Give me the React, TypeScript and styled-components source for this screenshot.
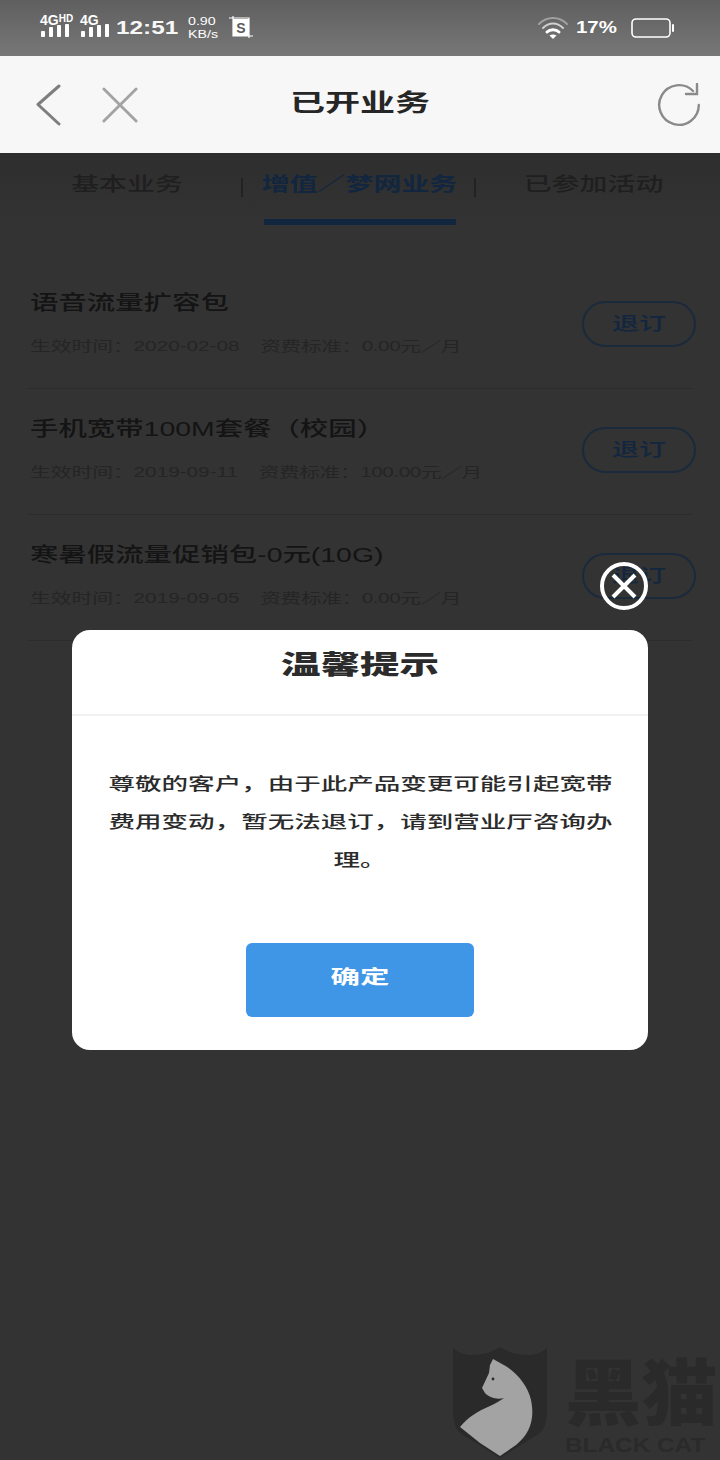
import React from 'react';
import styled, { createGlobalStyle } from 'styled-components';

const GlobalStyle = createGlobalStyle`
  html, body {
    margin: 0;
    padding: 0;
    background: #333333;
  }
  * {
    box-sizing: border-box;
  }
`;

const FONT = `"Liberation Sans", "Noto Sans CJK SC", sans-serif`;

const Page = styled.div`
  position: relative;
  width: 720px;
  height: 1460px;
  overflow: hidden;
  background: #333333;
  font-family: ${FONT};
`;

const StatusBar = styled.div`
  display: flex;
  align-items: center;
  height: 56px;
  padding: 0 46px 0 40px;
  background: linear-gradient(#5f5f5f, #777777);
  color: #ffffff;
`;

const SignalGroup = styled.div`
  display: flex;
  flex-direction: column;
  width: 38px;
  margin: 0 2px 8px 0;
`;

const SignalLabel = styled.span`
  height: 12px;
  font-size: 14px;
  line-height: 16px;
  font-weight: 700;
  white-space: nowrap;
  sup {
    font-size: 10px;
    line-height: 0;
    vertical-align: 3px;
  }
`;

const Clock = styled.span`
  width: 72px;
  margin-left: -4px;
  font-size: 19px;
  font-weight: 700;
  white-space: nowrap;
  opacity: 0.95;
  transform: scaleX(1.28);
  transform-origin: left center;
`;

const Speed = styled.div`
  display: flex;
  flex-direction: column;
  width: 41px;
  font-size: 10px;
  line-height: 13px;
  white-space: nowrap;
  transform: scaleX(1.42);
  transform-origin: left center;
`;

const StatusRight = styled.div`
  display: flex;
  align-items: center;
  margin-left: auto;
`;

const Battery = styled.span`
  width: 41px;
  margin: 0 14px 0 8px;
  font-size: 17px;
  font-weight: 700;
  white-space: nowrap;
  transform: scaleX(1.2);
  transform-origin: left center;
`;

const Header = styled.header`
  display: flex;
  align-items: center;
  justify-content: space-between;
  position: relative;
  height: 97px;
  padding: 0 19px 0 36px;
  background: #f7f7f7;
`;

const NavIcons = styled.div`
  display: flex;
  align-items: center;
  gap: 40px;
`;

const HeaderTitle = styled.h1`
  position: absolute;
  left: 0;
  right: 0;
  top: 32px;
  margin: 0;
  font-size: 24px;
  line-height: 30px;
  font-weight: 700;
  text-align: center;
  color: #262626;
  transform: scaleX(1.46);
`;

const Tabs = styled.nav`
  display: grid;
  grid-template-columns: 243px 233px 244px;
  height: 72px;
  background: linear-gradient(#2e2e2e, #333333);
`;

const Tab = styled.div<{ $divider?: boolean }>`
  position: relative;
  display: flex;
  justify-content: center;
  ${p => p.$divider && `
    &::after {
      content: '';
      position: absolute;
      right: 0;
      top: 25px;
      width: 2px;
      height: 19px;
      background: #222222;
    }
  `}
`;

const TabLabel = styled.div<{ $active?: boolean; $shift?: number }>`
  display: flex;
  justify-content: center;
  width: 192px;
  height: 72px;
  margin-left: ${p => p.$shift ?? 0}px;
  padding-top: 21px;
  border-bottom: 6px solid ${p => (p.$active ? '#12263f' : 'transparent')};
`;

const TabText = styled.span<{ $active?: boolean }>`
  font-size: 19px;
  line-height: 22px;
  font-weight: ${p => (p.$active ? 700 : 500)};
  white-space: nowrap;
  color: ${p => (p.$active ? '#12263f' : '#1f1f1f')};
  transform: scaleX(1.47);
`;

const List = styled.div`
  padding: 38px 28px 0;
`;

const Row = styled.div`
  display: flex;
  justify-content: space-between;
  align-items: flex-start;
  height: 126px;
  padding: 0 0 0 2px;
  border-bottom: 1px solid #2c2c2c;
`;

const RowBody = styled.div`
  display: flex;
  flex-direction: column;
  gap: 21px;
  padding-top: 27px;
`;

const RowTitle = styled.div`
  height: 26px;
  font-size: 20px;
  line-height: 26px;
  font-weight: 500;
  color: #141414;
  white-space: nowrap;
  transform: scaleX(1.42);
  transform-origin: left center;
`;

const RowMeta = styled.div`
  display: flex;
  gap: 14px;
  height: 18px;
  font-size: 14px;
  line-height: 18px;
  color: #252525;
  white-space: nowrap;
  transform: scaleX(1.48);
  transform-origin: left center;
`;

const FeeText = styled.span`
  letter-spacing: -0.3px;
`;

const CancelButton = styled.button`
  flex: none;
  width: 114px;
  height: 46px;
  margin: 38px -4px 0 0;
  padding: 0 0 4px;
  border: 2px solid #1b2a3b;
  border-radius: 23px;
  background: transparent;
  font-family: ${FONT};
  font-size: 18px;
  font-weight: 500;
  color: #12263f;
`;

const CancelText = styled.span`
  display: inline-block;
  transform: scaleX(1.5);
`;

const CloseButton = styled.button`
  position: absolute;
  left: 600px;
  top: 562px;
  width: 48px;
  height: 48px;
  padding: 0;
  border: none;
  background: transparent;
`;

const Modal = styled.div`
  position: absolute;
  left: 72px;
  top: 630px;
  width: 576px;
  height: 420px;
  display: flex;
  flex-direction: column;
  border-radius: 18px;
  background: #ffffff;
`;

const ModalHeader = styled.div`
  display: flex;
  justify-content: center;
  height: 86px;
  padding-top: 19px;
  border-bottom: 2px solid #f1f1f1;
`;

const ModalTitle = styled.h2`
  margin: 0;
  font-size: 26px;
  line-height: 32px;
  font-weight: 900;
  color: #2b2b2b;
  transform: scaleX(1.52);
`;

const ModalBody = styled.div`
  display: flex;
  flex-direction: column;
  align-items: center;
  padding-top: 50px;
  height: 227px;
`;

const ModalLine = styled.div`
  height: 38px;
  font-size: 17px;
  line-height: 38px;
  font-weight: 500;
  white-space: nowrap;
  color: #2b2b2b;
  transform: scaleX(1.56);
`;

const ModalFooter = styled.div`
  display: flex;
  justify-content: center;
`;

const ConfirmButton = styled.button`
  width: 228px;
  height: 74px;
  padding: 0 0 10px;
  border: none;
  border-radius: 6px;
  background: #4096e6;
  font-family: ${FONT};
  font-size: 19px;
  font-weight: 700;
  color: #ffffff;
`;

const ConfirmText = styled.span`
  display: inline-block;
  transform: scaleX(1.55);
`;

const Watermark = styled.div`
  position: absolute;
  left: 450px;
  top: 1344px;
  display: flex;
  gap: 15px;
  white-space: nowrap;
`;

const BrandText = styled.div`
  display: flex;
  flex-direction: column;
  width: 155px;
  color: #2a2a2a;
  font-weight: 900;
`;

const BrandName = styled.span`
  height: 80px;
  margin-top: 10px;
  font-size: 72px;
  line-height: 80px;
  transform: scaleX(1.06);
  transform-origin: left center;
`;

const BrandLatin = styled.span`
  height: 22px;
  font-size: 21px;
  line-height: 22px;
  transform: scaleX(1.16);
  transform-origin: left center;
`;

type Item = { name: string; date: string; fee: string };

const items: Item[] = [
  { name: '语音流量扩容包', date: '2020-02-08', fee: '0.00' },
  { name: '手机宽带100M套餐（校园）', date: '2019-09-11', fee: '100.00' },
  { name: '寒暑假流量促销包-0元(10G)', date: '2019-09-05', fee: '0.00' },
];

const SignalBars = () => (
  <svg width="30" height="13" viewBox="0 0 30 13" fill="#ffffff">
    <rect x="1" y="7" width="4" height="6" rx="0.8" />
    <rect x="9" y="3" width="4" height="10" rx="0.8" />
    <rect x="17" y="1" width="4" height="12" rx="0.8" />
    <rect x="25" y="0" width="4" height="13" rx="0.8" />
  </svg>
);

const ScreenshotIcon = () => (
  <svg width="24" height="24" viewBox="0 0 24 24">
    <rect x="4" y="3" width="16" height="17" fill="#ffffff" />
    <path d="M0 2h20v20M4 0v20h20" fill="none" stroke="#ffffff" strokeWidth="1.2" />
    <text x="12" y="17" textAnchor="middle" fontFamily="Liberation Sans" fontWeight="700" fontSize="14" fill="#5c5c5c">S</text>
  </svg>
);

const WifiIcon = () => (
  <svg width="30" height="24" viewBox="0 0 30 24" fill="none" strokeLinecap="round">
    <path d="M1 8C9 0 21 0 29 8" stroke="#a0a0a0" strokeWidth="2" />
    <path d="M5 12C11 6 19 6 25 12" stroke="#d0d0d0" strokeWidth="2" />
    <path d="M9 16C12 13 18 13 21 16" stroke="#ffffff" strokeWidth="3" />
    <path d="M11.5 19.5L15 23L18.5 19.5C16.5 18 13.5 18 11.5 19.5Z" fill="#ffffff" />
  </svg>
);

const BatteryIcon = () => (
  <svg width="43" height="21" viewBox="0 0 43 21" fill="none">
    <rect x="1" y="1" width="38" height="18" rx="4" stroke="#ffffff" strokeWidth="1.6" />
    <rect x="41" y="6" width="2" height="8" rx="1" fill="#ffffff" />
  </svg>
);

const BackIcon = () => (
  <svg width="26" height="42" viewBox="0 0 26 42" fill="none">
    <path d="M23 2L2 20.5L23 40" stroke="#7e7e7e" strokeWidth="3" strokeLinecap="round" strokeLinejoin="round" />
  </svg>
);

const DismissIcon = () => (
  <svg width="36" height="36" viewBox="0 0 38 38" fill="none">
    <path d="M2 2L36 36M36 2L2 36" stroke="#a3a3a3" strokeWidth="3" strokeLinecap="round" />
  </svg>
);

const RefreshIcon = () => (
  <svg width="44" height="44" viewBox="0 0 44 44" fill="none" stroke="#8a8a8a" strokeWidth="2.4" strokeLinecap="round">
    <path d="M36 8A19.8 19.8 0 1 0 41.8 22" />
    <path d="M40 1V11H29" />
  </svg>
);

const CircleCloseIcon = () => (
  <svg width="48" height="48" viewBox="0 0 48 48" fill="none" stroke="#ffffff">
    <circle cx="24" cy="24" r="22" strokeWidth="4" />
    <path d="M13 13L35 35M35 13L13 35" strokeWidth="4" />
  </svg>
);

const CatLogo = () => (
  <svg width="100" height="116" viewBox="0 0 100 116">
    <path d="M3 4C10 10 16 11 23 11C33 11 42 8 50 3C58 8 67 11 77 11C84 11 90 10 97 4V66C97 77 95 84 90 89L50 114L10 89C5 84 3 77 3 66Z" fill="#2a2a2a" />
    <path d="M43 15L52 20C66 27 78 42 81 56C85 75 80 90 66 101L50 112L30 99L10 83C18 73 28 67 40 62C46 59 50 57 54 54C46 56 39 53 35 49L32 44L39 29L40 21Z" fill="#a3a3a3" />
    <circle cx="43" cy="35" r="1.4" fill="#2a2a2a" />
  </svg>
);

const App: React.FC = () => {
  return (
    <Page>
      <GlobalStyle />
      <StatusBar>
        <SignalGroup>
          <SignalLabel>4G<sup>HD</sup></SignalLabel>
          <SignalBars />
        </SignalGroup>
        <SignalGroup>
          <SignalLabel>4G</SignalLabel>
          <SignalBars />
        </SignalGroup>
        <Clock>12:51</Clock>
        <Speed>
          <span>0.90</span>
          <span>KB/s</span>
        </Speed>
        <ScreenshotIcon />
        <StatusRight>
          <WifiIcon />
          <Battery>17%</Battery>
          <BatteryIcon />
        </StatusRight>
      </StatusBar>

      <Header>
        <NavIcons>
          <BackIcon />
          <DismissIcon />
        </NavIcons>
        <HeaderTitle>已开业务</HeaderTitle>
        <RefreshIcon />
      </Header>

      <Tabs>
        <Tab $divider>
          <TabLabel $shift={12}>
            <TabText>基本业务</TabText>
          </TabLabel>
        </Tab>
        <Tab $divider>
          <TabLabel $active>
            <TabText $active>增值／梦网业务</TabText>
          </TabLabel>
        </Tab>
        <Tab>
          <TabLabel $shift={-9}>
            <TabText>已参加活动</TabText>
          </TabLabel>
        </Tab>
      </Tabs>

      <List>
        {items.map(item => (
          <Row key={item.date}>
            <RowBody>
              <RowTitle>{item.name}</RowTitle>
              <RowMeta>
                <span>生效时间：{item.date}</span>
                <FeeText>资费标准：{item.fee}元／月</FeeText>
              </RowMeta>
            </RowBody>
            <CancelButton>
              <CancelText>退订</CancelText>
            </CancelButton>
          </Row>
        ))}
      </List>

      <CloseButton aria-label="关闭">
        <CircleCloseIcon />
      </CloseButton>

      <Modal>
        <ModalHeader>
          <ModalTitle>温馨提示</ModalTitle>
        </ModalHeader>
        <ModalBody>
          <ModalLine>尊敬的客户，由于此产品变更可能引起宽带</ModalLine>
          <ModalLine>费用变动，暂无法退订，请到营业厅咨询办</ModalLine>
          <ModalLine>理。</ModalLine>
        </ModalBody>
        <ModalFooter>
          <ConfirmButton>
            <ConfirmText>确定</ConfirmText>
          </ConfirmButton>
        </ModalFooter>
      </Modal>

      <Watermark>
        <CatLogo />
        <BrandText>
          <BrandName>黑猫</BrandName>
          <BrandLatin>BLACK CAT</BrandLatin>
        </BrandText>
      </Watermark>
    </Page>
  );
};

export default App;
